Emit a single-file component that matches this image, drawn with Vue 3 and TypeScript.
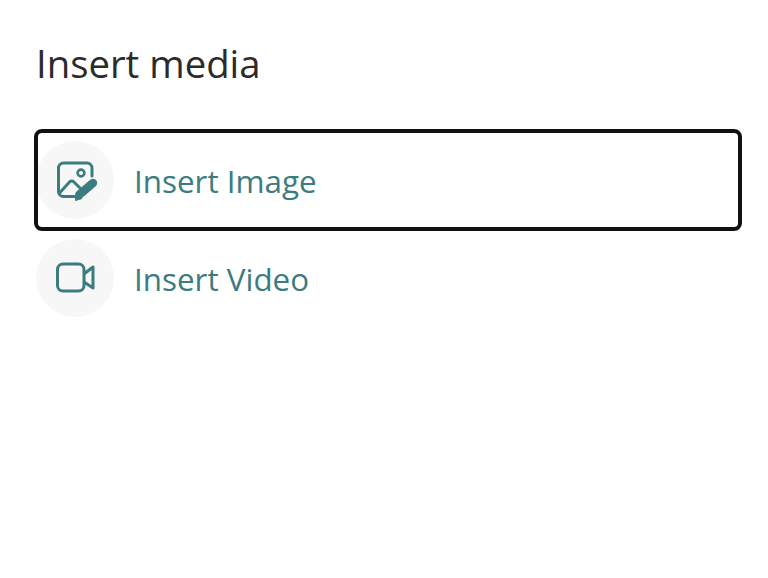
<script setup lang="ts">
const title: string = 'Insert media'
</script>

<template>
  <main class="panel">
    <h1 class="title">{{ title }}</h1>
    <ul class="list">
      <li class="row focused">
        <span class="disc">
          <svg class="icon" viewBox="0 0 42 42" fill="none">
            <path d="M21 37.500H9.500A5 5 0 0 1 4.500 32.500V9A5 5 0 0 1 9.500 4H33A5 5 0 0 1 38 9V17" stroke="#3b7c80" stroke-width="3" stroke-linecap="round"/>
            <path d="M6 33.500L15.500 23a3 3 0 0 1 4.400 0L26 29" stroke="#3b7c80" stroke-width="3" stroke-linecap="round" stroke-linejoin="round"/>
            <circle cx="27" cy="14" r="3.400" stroke="#3b7c80" stroke-width="2.600"/>
            <path d="M25.500 35.500L39 24" stroke="#3b7c80" stroke-width="8.500" stroke-linecap="round"/>
            <path d="M21.500 41.500L22 34L28 39.500Z" fill="#3b7c80" stroke="#3b7c80" stroke-linejoin="round"/>
          </svg>
        </span>
        <span class="label">Insert Image</span>
      </li>
      <li class="row">
        <span class="disc">
          <svg class="icon" viewBox="0 0 42 42" fill="none">
            <rect x="3.500" y="7" width="26.500" height="27" rx="5.500" stroke="#3b7c80" stroke-width="3"/>
            <path d="M30 17L39 10V31L30 25" stroke="#3b7c80" stroke-width="3" stroke-linejoin="round"/>
          </svg>
        </span>
        <span class="label">Insert Video</span>
      </li>
    </ul>
  </main>
</template>

<style>
html, body { margin: 0; background: #fff; }
</style>

<style scoped>
.panel {
  width: 768px;
  height: 578px;
  box-sizing: border-box;
  padding: 36px 28px 0 36px;
  font-family: "Open Sans", "Noto Sans", sans-serif;
  overflow: hidden;
}
.title {
  margin: 0 0 40px 0;
  font-size: 38.300px;
  line-height: 55px;
  font-weight: 400;
  color: #2b2b2b;
}
.list {
  list-style: none;
  margin: 0;
  padding: 0;
}
.row {
  height: 98px;
  display: flex;
  align-items: center;
  gap: 20px;
  border-radius: 6px;
}
.focused {
  outline: 4px solid #111;
  outline-offset: -2px;
}
.disc {
  width: 78px;
  height: 78px;
  border-radius: 50%;
  background: #f7f7f7;
  display: flex;
  align-items: center;
  justify-content: center;
  flex: none;
}
.icon {
  width: 42px;
  height: 42px;
  overflow: visible;
}
.label {
  font-size: 31.400px;
  color: #3b7c80;
}
</style>
